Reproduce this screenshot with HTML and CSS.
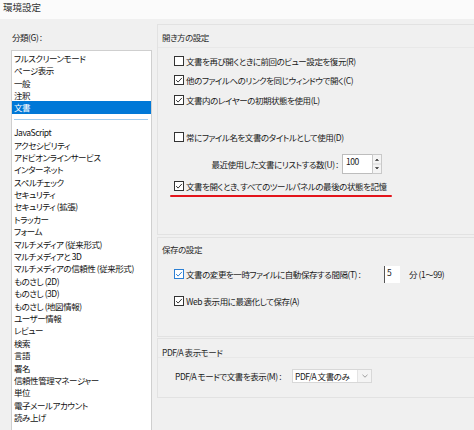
FILE: index.html
```html
<!DOCTYPE html>
<html lang="ja">
<head>
<meta charset="utf-8">
<title>環境設定</title>
<link rel="stylesheet" href="styles.css">
</head>
<body>
<div class="titlebar">環境設定</div>
<div class="main">
  <div class="left">
    <div class="cat-label">分類(G) :</div>
    <ul class="list">
      <li>フルスクリーンモード</li>
      <li>ページ表示</li>
      <li>一般</li>
      <li>注釈</li>
      <li class="sel">文書</li>
      <li class="sep"><span></span></li>
      <li>JavaScript</li>
      <li>アクセシビリティ</li>
      <li>アドビオンラインサービス</li>
      <li>インターネット</li>
      <li>スペルチェック</li>
      <li>セキュリティ</li>
      <li>セキュリティ (拡張)</li>
      <li>トラッカー</li>
      <li>フォーム</li>
      <li>マルチメディア (従来形式)</li>
      <li>マルチメディアと 3D</li>
      <li>マルチメディアの信頼性 (従来形式)</li>
      <li>ものさし (2D)</li>
      <li>ものさし (3D)</li>
      <li>ものさし (地図情報)</li>
      <li>ユーザー情報</li>
      <li>レビュー</li>
      <li>検索</li>
      <li>言語</li>
      <li>署名</li>
      <li>信頼性管理マネージャー</li>
      <li>単位</li>
      <li>電子メールアカウント</li>
      <li>読み上げ</li>
    </ul>
  </div>
  <div class="right">
    <section class="group g1">
      <div class="ghead">開き方の設定</div>
      <div class="gbody">
        <div class="row r1">
          <svg class="cb" width="10" height="10" viewBox="0 0 10 10"><rect x="0.5" y="0.5" width="9" height="9" fill="#fff" stroke="#333"/></svg>
          <span>文書を再び開くときに前回のビュー設定を復元(R)</span>
        </div>
        <div class="row r1">
          <svg class="cb" width="10" height="10" viewBox="0 0 10 10"><rect x="0.5" y="0.5" width="9" height="9" fill="#fff" stroke="#333"/><path d="M2.2 5.1 L4.1 7.1 L7.9 2.9" fill="none" stroke="#333" stroke-width="1"/></svg>
          <span>他のファイルへのリンクを同じウィンドウで開く(C)</span>
        </div>
        <div class="row r1">
          <svg class="cb" width="10" height="10" viewBox="0 0 10 10"><rect x="0.5" y="0.5" width="9" height="9" fill="#fff" stroke="#333"/><path d="M2.2 5.1 L4.1 7.1 L7.9 2.9" fill="none" stroke="#333" stroke-width="1"/></svg>
          <span>文書内のレイヤーの初期状態を使用(L)</span>
        </div>
        <div class="row r4">
          <svg class="cb" width="10" height="10" viewBox="0 0 10 10"><rect x="0.5" y="0.5" width="9" height="9" fill="#fff" stroke="#333"/></svg>
          <span>常にファイル名を文書のタイトルとして使用(D)</span>
        </div>
        <div class="row r5">
          <span class="numlabel">最近使用した文書にリストする数(U) :</span>
          <div class="numbox">100</div>
          <svg class="spin" width="10" height="20" viewBox="0 0 10 20"><rect x="0.5" y="0.5" width="9" height="19" fill="#f4f4f4" stroke="#c9c9c9"/><line x1="1" y1="10" x2="9" y2="10" stroke="#d6d6d6"/><path d="M3.5 6.5 L5 5 L6.5 6.5Z" fill="#333" stroke="#333" stroke-width="0.6"/><path d="M3.5 13.5 L5 15 L6.5 13.5Z" fill="#333" stroke="#333" stroke-width="0.6"/></svg>
        </div>
        <div class="row r6">
          <svg class="cb" width="10" height="10" viewBox="0 0 10 10"><rect x="0.5" y="0.5" width="9" height="9" fill="#fff" stroke="#333"/><path d="M2.2 5.1 L4.1 7.1 L7.9 2.9" fill="none" stroke="#333" stroke-width="1"/></svg>
          <span>文書を開くとき、すべてのツールパネルの最後の状態を記憶</span>
        </div>
        <div class="redline"></div>
      </div>
    </section>
    <section class="group g2">
      <div class="ghead">保存の設定</div>
      <div class="gbody">
        <div class="row s1">
          <svg class="cb" width="10" height="10" viewBox="0 0 10 10"><rect x="0.5" y="0.5" width="9" height="9" fill="#fff" stroke="#2b7fd4"/><path d="M2.2 5.1 L4.1 7.1 L7.9 2.9" fill="none" stroke="#2b7fd4" stroke-width="1"/></svg>
          <span class="savelabel">文書の変更を一時ファイルに自動保存する間隔(T) :</span>
          <div class="minbox">5</div>
          <span class="unit">分 (1〜99)</span>
        </div>
        <div class="row s2">
          <svg class="cb" width="10" height="10" viewBox="0 0 10 10"><rect x="0.5" y="0.5" width="9" height="9" fill="#fff" stroke="#333"/><path d="M2.2 5.1 L4.1 7.1 L7.9 2.9" fill="none" stroke="#333" stroke-width="1"/></svg>
          <span>Web 表示用に最適化して保存(A)</span>
        </div>
      </div>
    </section>
    <section class="group g3">
      <div class="ghead">PDF/A 表示モード</div>
      <div class="gbody">
        <div class="row p1">
          <span class="pdflabel">PDF/A モードで文書を表示(M) :</span>
          <div class="select">
            <span class="selval">PDF/A 文書のみ</span>
            <span class="selbtn"><svg width="6" height="4" viewBox="0 0 6 4"><path d="M0.5 0.8 L3 3.2 L5.5 0.8" fill="none" stroke="#888" stroke-width="0.8"/></svg></span>
          </div>
        </div>
      </div>
    </section>
  </div>
</div>
</body>
</html>
```

FILE: styles.css
```css
* {
  box-sizing: border-box;
  margin: 0;
  padding: 0;
}

html, body {
  width: 474px;
  height: 430px;
  overflow: hidden;
}

body {
  font-family: "Noto Sans CJK JP", "Noto Sans", sans-serif;
  font-size: 8.5px;
  letter-spacing: -0.45px;
  font-feature-settings: "palt";
  color: #1a1a1a;
  background: #f0f0f0;
}

.titlebar {
  height: 19px;
  background: #fbfbfb;
  padding-left: 3px;
  line-height: 14px;
  font-size: 9.5px;
  letter-spacing: 0;
  color: #333;
}

.main {
  display: flex;
  height: 411px;
}

.left {
  width: 157px;
  flex: none;
  padding-left: 11px;
  display: flex;
  flex-direction: column;
}

.cat-label {
  line-height: 12px;
  margin-top: 12px;
  margin-bottom: 7px;
  padding-left: 1px;
  color: #222;
}

.list {
  width: 141px;
  flex: 1;
  background: #fff;
  border: 1px solid #cfcfcf;
  border-bottom: none;
  list-style: none;
  padding-top: 0.8px;
  overflow: hidden;
}

.list li {
  height: 12.4px;
  line-height: 12.4px;
  padding-left: 2px;
  white-space: nowrap;
  color: #111;
}

.list li.sel {
  background: #0078d7;
  color: #fff;
}

.list li.sep {
  display: flex;
  align-items: center;
  padding: 0 3px 0 2px;
}

.list li.sep span {
  display: block;
  width: 100%;
  height: 1px;
  background: #a3cdee;
}

.right {
  width: 320px;
  flex: none;
  padding-top: 5px;
  display: flex;
  flex-direction: column;
}

.group {
  border: 1px solid #e2e2e2;
  border-right: none;
  display: flex;
  flex-direction: column;
}

.ghead {
  padding-left: 4px;
  line-height: 12px;
  color: #2a2a2a;
  border-bottom: 1px solid #e8e8e8;
  flex: none;
}

.row {
  display: flex;
  align-items: center;
  white-space: nowrap;
}

.cb {
  flex: none;
  margin-right: 2px;
}

/* group 1 */
.g1 {
  height: 211px;
}

.g1 .ghead {
  height: 23px;
  padding-top: 6px;
}

.g1 .gbody {
  padding: 3px 0 0 16px;
}

.r1 {
  height: 19.5px;
}

.r4 {
  height: 19.5px;
  margin-top: 17.75px;
}

.r5 {
  height: 20px;
  margin-top: 7.25px;
}

.numlabel {
  display: block;
  width: 128px;
  margin-left: 36px;
  margin-right: 4px;
  text-align: right;
}

.numbox {
  width: 30px;
  height: 20px;
  background: #fff;
  border: 1px solid #bdbdbd;
  border-right: none;
  padding: 0 0 0 3px;
  line-height: 12px;
}

.spin {
  flex: none;
}

.r6 {
  height: 17px;
  margin-top: 3.25px;
}

.redline {
  width: 222px;
  height: 2px;
  margin-left: -4px;
  margin-top: 0.5px;
  background: #e3141b;
  border-radius: 1px;
}

/* group 2 */
.g2 {
  height: 100px;
  margin-top: 2px;
}

.g2 .ghead {
  height: 20px;
  padding-top: 5px;
  border-bottom-color: transparent;
}

.g2 .gbody {
  padding: 6px 0 0 16px;
}

.s1 {
  height: 20px;
}

.savelabel {
  display: block;
  width: 198px;
}

.minbox {
  width: 16px;
  height: 17px;
  background: #fff;
  border-left: 1px solid #555;
  padding-left: 2px;
  line-height: 12px;
}

.unit {
  margin-left: 9px;
}

.s2 {
  height: 20px;
  margin-top: 7px;
}

/* group 3 */
.g3 {
  height: 60px;
  margin-top: 1px;
}

.g3 .ghead {
  height: 19px;
  padding-top: 7px;
}

.g3 .gbody {
  padding: 11px 0 0 17px;
}

.p1 {
  height: 14px;
}

.pdflabel {
  display: block;
  width: 117px;
}

.select {
  display: flex;
  width: 80px;
  height: 14px;
  background: #fff;
  border: 1px solid #d8d8d8;
}

.selval {
  flex: 1;
  padding-left: 2px;
  line-height: 12px;
}

.selbtn {
  width: 14px;
  display: flex;
  align-items: center;
  justify-content: center;
  background: #f4f4f4;
  border-left: 1px solid #e4e4e4;
}
```
